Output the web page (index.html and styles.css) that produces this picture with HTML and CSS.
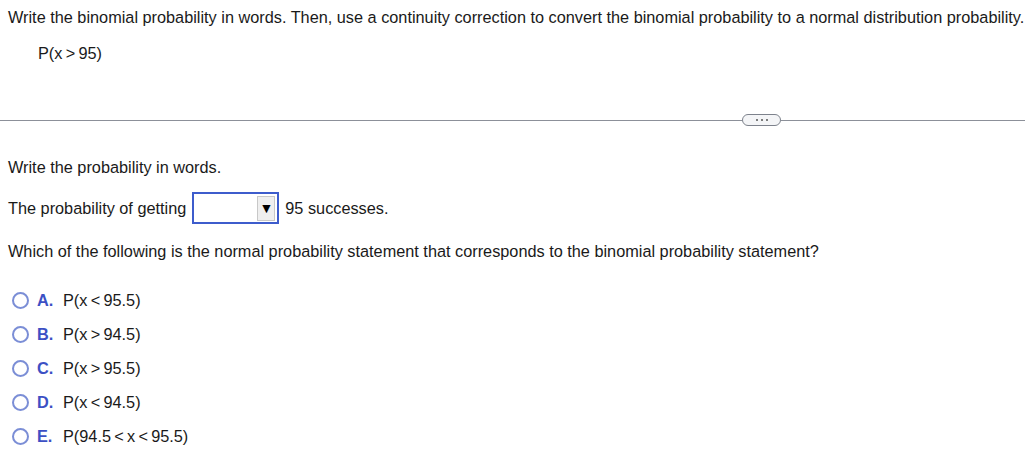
FILE: index.html
```html
<!DOCTYPE html>
<html>
<head>
<meta charset="utf-8">
<link rel="stylesheet" href="styles.css">
</head>
<body>
<div class="question">
  <p class="prompt">Write the binomial probability in words. Then, use a continuity correction to convert the binomial probability to a normal distribution probability.</p>
  <p class="expr">P(x&thinsp;&gt;&thinsp;95)</p>
</div>
<div class="divider">
  <div class="line"></div>
  <div class="pill"><span></span><span></span><span></span></div>
  <div class="line grow"></div>
</div>
<div class="answer">
  <p class="step">Write the probability in words.</p>
  <p class="fill">The probability of getting
    <span class="select"><span class="arrow">&#9660;</span></span>
    95 successes.</p>
  <p class="step">Which of the following is the normal probability statement that corresponds to the binomial probability statement?</p>
  <ul class="options">
    <li><span class="radio"></span><span class="letter">A.</span><span>P(x&thinsp;&lt;&thinsp;95.5)</span></li>
    <li><span class="radio"></span><span class="letter">B.</span><span>P(x&thinsp;&gt;&thinsp;94.5)</span></li>
    <li><span class="radio"></span><span class="letter">C.</span><span>P(x&thinsp;&gt;&thinsp;95.5)</span></li>
    <li><span class="radio"></span><span class="letter">D.</span><span>P(x&thinsp;&lt;&thinsp;94.5)</span></li>
    <li><span class="radio"></span><span class="letter">E.</span><span>P(94.5&thinsp;&lt;&thinsp;x&thinsp;&lt;&thinsp;95.5)</span></li>
  </ul>
</div>
</body>
</html>
```
FILE: styles.css
```css
html, body { margin: 0; padding: 0; background: #fff; }
body {
  font-family: "Liberation Sans", Arial, sans-serif;
  font-size: 16.3px;
  color: #1a1a1a;
}
p { margin: 0; }
.question { padding: 8px 0 0 8px; }
.prompt { line-height: 18px; white-space: nowrap; }
.expr { margin-top: 18px; padding-left: 30px; line-height: 18px; }
.divider {
  display: flex;
  align-items: center;
  margin-top: 51px;
  height: 14px;
}
.line { height: 1px; background: #8c9099; width: 742px; }
.line.grow { flex: 1; width: auto; }
.pill {
  width: 37px;
  height: 10px;
  border: 1px solid #7d828c;
  border-radius: 6px;
  background: #f4f5f7;
  display: flex;
  justify-content: center;
  align-items: center;
  gap: 3px;
}
.pill span { width: 2px; height: 2px; background: #555; border-radius: 1px; }
.answer { padding: 31px 8px 0 8px; }
.step { line-height: 18px; }
.fill {
  margin-top: 16px;
  display: flex;
  align-items: center;
  line-height: 18px;
}
.select {
  display: inline-flex;
  justify-content: flex-end;
  align-items: center;
  box-sizing: border-box;
  width: 87px;
  height: 32px;
  margin: 0 6px 0 6px;
  border: 2px solid #3d5ccc;
  padding: 2px;
  background: #fff;
}
.arrow {
  box-sizing: border-box;
  width: 18px;
  height: 25px;
  background: #efefef;
  border: 1px solid #c8c8c8;
  font-size: 14px;
  color: #000;
  display: flex;
  align-items: center;
  justify-content: center;
}
.fill + .step { margin-top: 18px; }
.options {
  list-style: none;
  margin: 23px 0 0 0;
  padding: 0 0 0 4px;
}
.options li {
  display: flex;
  align-items: center;
  height: 34px;
  line-height: 18px;
}
.radio {
  box-sizing: border-box;
  width: 17px;
  height: 17px;
  border: 2px solid #7b8ed6;
  border-radius: 50%;
  margin-right: 8px;
}
.letter {
  font-weight: bold;
  color: #3c50c4;
  width: 26px;
}
```
